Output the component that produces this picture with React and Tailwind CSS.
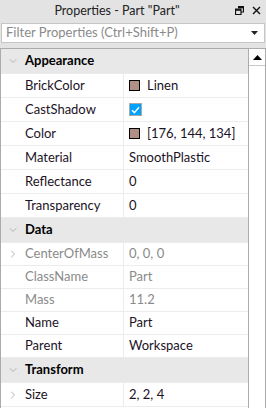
import { ChevronDown, ChevronRight } from 'lucide-react';

const sections = [
  {
    title: 'Appearance',
    h: 'h-[24px]',
    rows: [
      { name: 'BrickColor', value: 'Linen', swatch: true },
      { name: 'CastShadow', check: true },
      { name: 'Color', value: '[176, 144, 134]', swatch: true },
      { name: 'Material', value: 'SmoothPlastic' },
      { name: 'Reflectance', value: '0' },
      { name: 'Transparency', value: '0' },
    ],
  },
  {
    title: 'Data',
    h: 'h-[23px]',
    rows: [
      { name: 'CenterOfMass', value: '0, 0, 0', dim: true, expand: true },
      { name: 'ClassName', value: 'Part', dim: true },
      { name: 'Mass', value: '11.2', dim: true },
      { name: 'Name', value: 'Part' },
      { name: 'Parent', value: 'Workspace' },
    ],
  },
  {
    title: 'Transform',
    h: 'h-[24px]',
    rows: [{ name: 'Size', value: '2, 2, 4', expand: true }],
  },
];

function Row({ row, h }) {
  const tone = row.dim ? 'text-[#8a8a8a]' : 'text-[#1b1226]';
  return <div className={`flex ${h} border-b border-[#ececec]`}>
    <div className={`flex w-[123px] shrink-0 items-center border-r border-[#ececec] ${tone}`}>
      <span className="flex w-[24px] justify-center text-[#9a9a9a]">{row.expand && <ChevronRight size={12} strokeWidth={1.5}/>}</span>
      {row.name}
    </div>
    <div className={`flex flex-1 items-center gap-[7px] pl-[5px] ${tone}`}>
      {row.swatch && <span className="h-[11px] w-[11px] border border-black bg-[#b09086]"/>}
      {row.check && <span className="flex h-[13px] w-[13px] items-center justify-center border border-[#a8a8a8] bg-[#00a2ff]">
        <svg width="9" height="8" viewBox="0 0 9 8"><path d="M1 4.2 3.4 6.6 8 1.2" fill="none" stroke="white" strokeWidth="1.4"/></svg>
      </span>}
      {row.value}
    </div>
  </div>;
}

export default function App() {
  return <div className="flex h-[408px] w-[266px] flex-col overflow-hidden bg-[#e3e3e3] text-[13px] text-[#1b1226]" style={{ fontFamily: 'Lato, "Noto Sans", sans-serif' }}>
    <div className="relative flex h-[22px] shrink-0 items-center justify-center pr-[32px] text-[12.5px] text-[#222]">
      Properties - Part "Part"
      <div className="absolute right-[5px] top-[6px] flex items-center gap-[8px]">
        <svg width="9" height="9" viewBox="0 0 9 9"><path d="M3 0.5h5.5v5.5h-2M0.5 3h5.5v5.5h-5.5z" fill="none" stroke="#111" strokeWidth="1.2"/><path d="M3 1.5h5.5" stroke="#111" strokeWidth="1.6"/><path d="M0.5 4h5.5" stroke="#111" strokeWidth="1.6"/></svg>
        <svg width="9" height="9" viewBox="0 0 9 9"><path d="M1 1 8 8M8 1 1 8" stroke="#111" strokeWidth="1.4"/></svg>
      </div>
    </div>
    <div className="mx-[1px] mt-[1px] flex h-[20px] shrink-0 items-center justify-between border border-[#c6c6c6] bg-white pl-[4px] pr-[6px] text-[#8a8a8a]">
      Filter Properties (Ctrl+Shift+P)
      <svg width="7" height="4" viewBox="0 0 7 4"><path d="M0 0h7L3.5 4z" fill="#222"/></svg>
    </div>
    <div className="mt-[5px] flex flex-1 border-l border-t border-[#ababab] bg-white">
      <div className="flex-1 overflow-hidden border-r border-[#ababab]">
        {sections.map((s) => <div key={s.title}>
          <div className="flex h-[25px] items-center border-b border-[#ececec] bg-[#e8e8e8] font-bold text-black">
            <span className="flex w-[24px] justify-center text-[#a0a0a0]"><ChevronDown size={12} strokeWidth={1.5}/></span>
            {s.title}
          </div>
          {s.rows.map((r) => <Row key={r.name} row={r} h={s.h}/>)}
        </div>)}
      </div>
      <div className="w-[17px] shrink-0 border-r border-[#ababab] bg-white">
        <div className="flex h-[17px] items-center justify-center border-b border-[#c8c8c8]">
          <svg width="9" height="5" viewBox="0 0 9 5"><path d="M0 5h9L4.5 0z" fill="#000"/></svg>
        </div>
      </div>
    </div>
  </div>;
}
